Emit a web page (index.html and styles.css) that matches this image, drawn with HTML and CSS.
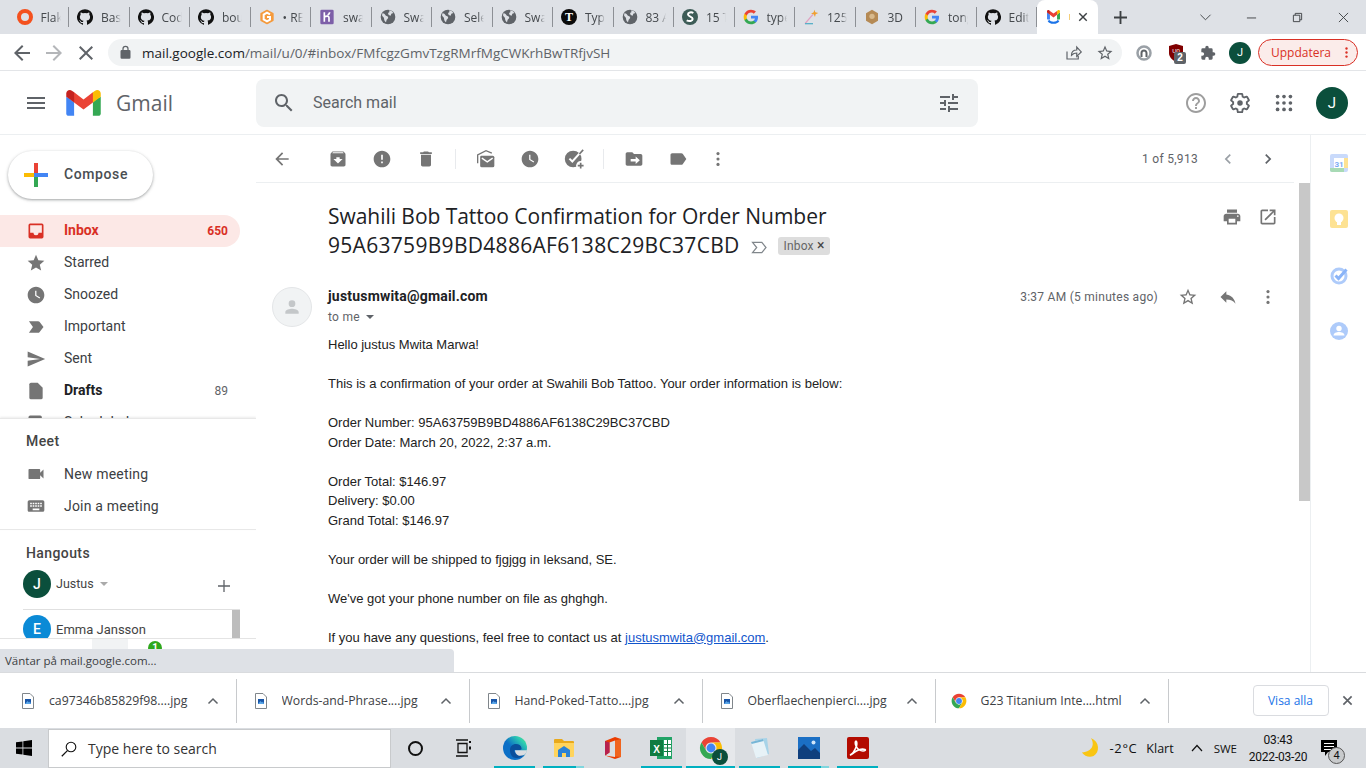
FILE: index.html
```html
<!DOCTYPE html>
<html lang="en">
<head>
  <meta charset="UTF-8">
  <title>Swahili Bob Tattoo Confirmation - Gmail</title>
  <link rel="stylesheet" href="styles.css">
</head>
<body>
  <!-- shared icons -->
  <svg class="sprite">
    <symbol id="i-github" viewBox="0 0 24 24"><path d="M12 .3a12 12 0 0 0-3.8 23.4c.6.1.8-.3.8-.6v-2c-3.3.7-4-1.6-4-1.6-.6-1.4-1.4-1.8-1.4-1.8-1-.7.1-.7.1-.7 1.2 0 1.9 1.2 1.9 1.2 1 1.8 2.8 1.3 3.5 1 0-.8.4-1.3.7-1.6-2.7-.3-5.5-1.3-5.5-6 0-1.2.5-2.3 1.3-3.1-.2-.4-.6-1.6 0-3.2 0 0 1-.3 3.4 1.2a11.5 11.5 0 0 1 6 0c2.3-1.5 3.3-1.2 3.3-1.2.6 1.6.2 2.8 0 3.2.9.8 1.3 1.9 1.3 3.2 0 4.6-2.8 5.6-5.5 5.9.5.4.9 1 .9 2.2v3.3c0 .3.1.7.8.6A12 12 0 0 0 12 .3"/></symbol>
    <symbol id="i-globe" viewBox="0 0 24 24"><circle cx="12" cy="12" r="11" fill="#5f6368"/><path fill="#dee1e6" d="M4 6c2 1 3 1 4 3s3 1 4 3-1 3-2 4l-1 4c-2-1-3-4-3-6s-3-3-3-5zM14 2c2 0 5 2 6 4l-3 1-1 3-3-1-1-3 2-1z"/></symbol>
    <symbol id="i-google" viewBox="0 0 24 24"><path fill="#4285F4" d="M22.56 12.25c0-.78-.07-1.53-.2-2.25H12v4.26h5.92c-.26 1.37-1.04 2.53-2.21 3.31v2.77h3.57c2.08-1.92 3.28-4.74 3.28-8.09z"/><path fill="#34A853" d="M12 23c2.97 0 5.46-.98 7.28-2.66l-3.57-2.77c-.98.66-2.23 1.06-3.71 1.06-2.86 0-5.29-1.93-6.16-4.53H2.18v2.84C3.99 20.53 7.7 23 12 23z"/><path fill="#FBBC05" d="M5.84 14.09c-.22-.66-.35-1.36-.35-2.09s.13-1.43.35-2.09V7.07H2.18C1.43 8.55 1 10.22 1 12s.43 3.45 1.18 4.93l2.85-2.22.81-.62z"/><path fill="#EA4335" d="M12 5.38c1.62 0 3.06.56 4.21 1.64l3.15-3.15C17.45 2.09 14.97 1 12 1 7.7 1 3.99 3.47 2.18 7.07l3.66 2.84c.87-2.6 3.3-4.53 6.16-4.53z"/></symbol>
    <symbol id="i-chrome" viewBox="0 0 24 24"><path fill="#ea4335" d="M21.53 6.5A11 11 0 0 0 2.47 6.5L7.24 14.75A5.5 5.5 0 0 1 12 6.5Z"/><path fill="#34a853" d="M2.47 6.5A11 11 0 0 0 12 23L16.76 14.75A5.5 5.5 0 0 1 7.24 14.75Z"/><path fill="#fbbc05" d="M12 23A11 11 0 0 0 21.53 6.5H12A5.5 5.5 0 0 1 16.76 14.75Z"/><circle cx="12" cy="12" r="4.4" fill="#4285f4"/></symbol>
    <symbol id="i-more" viewBox="0 0 24 24"><circle cx="12" cy="5.5" r="1.9"/><circle cx="12" cy="12" r="1.9"/><circle cx="12" cy="18.5" r="1.9"/></symbol>
    <symbol id="i-clock" viewBox="0 0 24 24"><path d="M12 2C6.5 2 2 6.5 2 12s4.5 10 10 10 10-4.5 10-10S17.5 2 12 2zm4.2 14.2L11 13V7h1.5v5.2l4.5 2.7-.8 1.3z"/></symbol>
    <symbol id="i-label" viewBox="0 0 24 24"><path d="M17.63 5.84C17.27 5.33 16.67 5 16 5L5 5.01C3.9 5.01 3 5.9 3 7v10c0 1.1.9 1.99 2 1.99L16 19c.67 0 1.27-.33 1.63-.84L22 12l-4.37-6.16z"/></symbol>
    <symbol id="i-file" viewBox="0 0 12 16"><path fill="#fff" stroke="#80868b" d="M.5.5h7.5l3.5 3.5v11.5H.5z"/><path fill="#1a56a8" d="M3 6h6v5H3z"/><path fill="#5aa7e8" d="M3 11l2.5-3 1.5 1.5L8 8.5 9 11z"/></symbol>
    <symbol id="i-chevup" viewBox="0 0 12 8"><path fill="none" stroke="#5f6368" stroke-width="1.5" d="M1.5 6.5L6 2l4.5 4.5"/></symbol>
    <symbol id="i-gm" viewBox="0 0 256 193">
      <path fill="#4285F4" d="M58.182 192.05V93.14L27.507 65.077 0 49.504v125.091c0 9.658 7.825 17.455 17.455 17.455h40.727z"/>
      <path fill="#34A853" d="M197.818 192.05h40.727c9.659 0 17.455-7.826 17.455-17.455V49.505l-31.156 17.837-27.026 25.798v98.91z"/>
      <path fill="#EA4335" d="M58.182 93.14l-4.174-38.647 4.174-36.989L128 69.868l69.818-52.364 4.669 34.992-4.669 40.644L128 145.504z"/>
      <path fill="#FBBC04" d="M197.818 17.504V93.14L256 49.504V26.231c0-21.585-24.64-33.89-41.89-20.945l-16.292 12.218z"/>
      <path fill="#C5221F" d="M0 49.504l26.759 20.07L58.182 93.14V17.504L41.89 5.286C24.61-7.66 0 4.646 0 26.23v23.273z"/>
    </symbol>
  </svg>

  <!-- tab strip -->
  <div class="tabstrip">
    <div class="tab"><svg class="favicon" viewBox="0 0 24 24"><circle cx="12" cy="12" r="9" fill="none" stroke="#f4511e" stroke-width="6"/></svg><span class="tab-title">Flak</span></div>
    <div class="tab"><svg class="favicon"><use href="#i-github"/></svg><span class="tab-title">Basi</span></div>
    <div class="tab"><svg class="favicon"><use href="#i-github"/></svg><span class="tab-title">Cod</span></div>
    <div class="tab"><svg class="favicon"><use href="#i-github"/></svg><span class="tab-title">bou</span></div>
    <div class="tab"><svg class="favicon" viewBox="0 0 24 24"><path fill="#f59a3c" stroke="#f59a3c" stroke-width="2" stroke-linejoin="round" d="M12 2l9 5v10l-9 5-9-5V7z"/><path fill="none" stroke="#fff" stroke-width="3" d="M16.5 8L12 5.500 7 8.500v7l5 3 4.500-2.500v-4H12"/></svg><span class="tab-title">• RE</span></div>
    <div class="tab"><svg class="favicon" viewBox="0 0 24 24"><rect x="2" y="1" width="20" height="22" rx="2" fill="#7d5fa8"/><path fill="none" stroke="#fff" stroke-width="2.5" d="M8 5v14M8 12c3-2 7-2 7 1v6M16 5c0 2-1 3-3 4"/></svg><span class="tab-title">swa</span></div>
    <div class="tab"><svg class="favicon"><use href="#i-globe"/></svg><span class="tab-title">Swa</span></div>
    <div class="tab"><svg class="favicon"><use href="#i-globe"/></svg><span class="tab-title">Sele</span></div>
    <div class="tab"><svg class="favicon"><use href="#i-globe"/></svg><span class="tab-title">Swa</span></div>
    <div class="tab"><svg class="favicon" viewBox="0 0 24 24"><circle cx="12" cy="12" r="12" fill="#0b0b0b"/><text x="12" y="18" text-anchor="middle" class="favicon-t">T</text></svg><span class="tab-title">Typ</span></div>
    <div class="tab"><svg class="favicon"><use href="#i-globe"/></svg><span class="tab-title">83 A</span></div>
    <div class="tab"><svg class="favicon" viewBox="0 0 24 24"><circle cx="12" cy="12" r="12" fill="#3d5c57"/><path fill="none" stroke="#fff" stroke-width="3" d="M17 6c-3-2-8-1-8 2 0 4 7 3 7 7 0 3-5 4-9 2"/></svg><span class="tab-title">15 T</span></div>
    <div class="tab"><svg class="favicon"><use href="#i-google"/></svg><span class="tab-title">type</span></div>
    <div class="tab"><svg class="favicon" viewBox="0 0 24 24"><path stroke="#e0a0c0" stroke-width="2" d="M3 22L15 8"/><path stroke="#5ab0c8" stroke-width="2" d="M3 22h12"/><path fill="#f0a030" d="M17 1l1.500 4L23 6l-4 2-1 4-2-4-4-1 4-2z"/></svg><span class="tab-title">125</span></div>
    <div class="tab"><svg class="favicon" viewBox="0 0 24 24"><path fill="#b58a55" d="M12 1l9 5.500v11L12 23l-9-5.500v-11z"/><circle cx="12" cy="11" r="4" fill="#d8b98c"/></svg><span class="tab-title">3D</span></div>
    <div class="tab"><svg class="favicon"><use href="#i-google"/></svg><span class="tab-title">tong</span></div>
    <div class="tab"><svg class="favicon"><use href="#i-github"/></svg><span class="tab-title">Edit</span></div>
    <div class="tab tab-active">
      <svg class="favicon-sm" viewBox="0 0 13 14"><use href="#i-gm" x="0" y="0" width="13" height="9.8"/><path fill="none" stroke="#1a73e8" stroke-width="2" d="M1.500 10.500c1.500 3 8.500 3 10 0"/></svg>
      <span class="tab-dot"></span>
      <svg class="tab-close" viewBox="0 0 12 12"><path stroke="#3c4043" stroke-width="1.7" d="M1.500 1.500l9 9M10.500 1.500l-9 9"/></svg>
    </div>
    <svg class="tab-new" viewBox="0 0 14 14"><path stroke="#3c4043" stroke-width="2" d="M7 0v14M0 7h14"/></svg>
    <div class="win-buttons">
      <svg class="win-btn" viewBox="0 0 12 8"><path fill="none" stroke="#3c4043" d="M.5 1L6 6.500 11.500 1"/></svg>
      <svg class="win-btn" viewBox="0 0 12 12"><path stroke="#3c4043" d="M1 6.500h10"/></svg>
      <svg class="win-btn" viewBox="0 0 12 12"><path fill="none" stroke="#3c4043" d="M1.500 3.500h7v7h-7zM3.500 3.500v-2h7v7h-2"/></svg>
      <svg class="win-btn" viewBox="0 0 12 12"><path stroke="#3c4043" d="M1 1l10 10M11 1L1 11"/></svg>
    </div>
  </div>

  <!-- browser toolbar -->
  <div class="browser-bar">
    <svg class="nav-btn" viewBox="0 0 24 24"><path fill="#5f6368" d="M20 11H7.83l5.59-5.59L12 4l-8 8 8 8 1.41-1.41L7.83 13H20v-2z"/></svg>
    <svg class="nav-btn" viewBox="0 0 24 24"><path fill="#b4b6b9" d="M4 11h12.17l-5.59-5.59L12 4l8 8-8 8-1.41-1.41L16.17 13H4v-2z"/></svg>
    <svg class="nav-btn" viewBox="0 0 24 24"><path fill="#5f6368" d="M19 6.41L17.59 5 12 10.59 6.41 5 5 6.41 10.59 12 5 17.59 6.41 19 12 13.41 17.59 19 19 17.59 13.41 12z"/></svg>
    <div class="omnibox">
      <svg class="omni-lock" viewBox="0 0 24 24"><path fill="#5f6368" d="M18 8h-1V6A5 5 0 0 0 7 6v2H6a2 2 0 0 0-2 2v10a2 2 0 0 0 2 2h12a2 2 0 0 0 2-2V10a2 2 0 0 0-2-2zM9 6a3 3 0 0 1 6 0v2H9z"/></svg>
      <span class="omni-url"><span class="omni-host">mail.google.com</span>/mail/u/0/#inbox/FMfcgzGmvTzgRMrfMgCWKrhBwTRfjvSH</span>
      <svg class="omni-icon" viewBox="0 0 24 24"><path fill="none" stroke="#5f6368" stroke-width="1.6" d="M4 10v10h15v-4M10 15c0-5 3-7 7-7V4l6 6.500-6 6V12c-3 0-5 1-7 3z"/></svg>
      <svg class="omni-icon" viewBox="0 0 24 24"><path fill="#5f6368" d="M22 9.24l-7.19-.62L12 2 9.19 8.63 2 9.24l5.46 4.73L5.82 21 12 17.27 18.18 21l-1.63-7.03L22 9.24zM12 15.4l-3.76 2.27 1-4.28-3.32-2.88 4.38-.38L12 6.1l1.71 4.04 4.38.38-3.32 2.88 1 4.28L12 15.4z"/></svg>
    </div>
    <svg class="ext ext-ring" viewBox="0 0 16 16"><circle cx="8" cy="8" r="6.5" fill="none" stroke="#9aa0a6" stroke-width="2.5"/><path fill="none" stroke="#5f6368" stroke-width="2" d="M5.500 12V8a2.500 2.500 0 0 1 5 0v4"/></svg>
    <div class="ext-ublock">
      <svg class="ublock-shield" viewBox="0 0 16 18"><path fill="#800000" d="M8 0l7 2v7c0 4-3 7-7 9-4-2-7-5-7-9V2z"/><text x="8" y="9" text-anchor="middle" class="ublock-text">U0</text></svg>
      <span class="ublock-badge">2</span>
    </div>
    <svg class="ext ext-puzzle" viewBox="0 0 24 24"><path fill="#5f6368" d="M20.5 11H19V7a2 2 0 0 0-2-2h-4V3.500a2.500 2.500 0 0 0-5 0V5H4a2 2 0 0 0-2 2v3.800h1.500a2.700 2.700 0 0 1 0 5.400H2V20a2 2 0 0 0 2 2h3.800v-1.500a2.700 2.700 0 0 1 5.400 0V22H17a2 2 0 0 0 2-2v-4h1.500a2.500 2.500 0 0 0 0-5z"/></svg>
    <span class="profile-chip">J</span>
    <div class="update-pill">
      <span>Uppdatera</span>
      <svg class="update-dots" viewBox="0 0 24 24"><use href="#i-more"/></svg>
    </div>
  </div>

  <!-- page viewport -->
  <div class="viewport">
    <header class="gm-header">
      <svg class="gm-menu" viewBox="0 0 24 24"><path d="M3 18h18v-2H3v2zm0-5h18v-2H3v2zm0-7v2h18V6H3z"/></svg>
      <svg class="gm-logo"><use href="#i-gm"/></svg>
      <span class="gm-wordmark">Gmail</span>
      <div class="gm-search">
        <svg class="gm-search-icon" viewBox="0 0 24 24"><path d="M15.5 14h-.79l-.28-.27C15.41 12.59 16 11.11 16 9.5 16 5.91 13.09 3 9.5 3S3 5.91 3 9.5 5.91 16 9.5 16c1.61 0 3.09-.59 4.23-1.57l.27.28v.79l5 4.99L20.49 19l-4.99-5zm-6 0C7.01 14 5 11.99 5 9.5S7.01 5 9.5 5 14 7.01 14 9.5 11.99 14 9.5 14z"/></svg>
        <span class="gm-search-text">Search mail</span>
        <svg class="gm-search-icon" viewBox="0 0 24 24"><path d="M3 17v2h6v-2H3zM3 5v2h10V5H3zm10 16v-2h8v-2h-8v-2h-2v6h2zM7 9v2H3v2h4v2h2V9H7zm14 4v-2H11v2h10zm-6-4h2V7h4V5h-4V3h-2v6z"/></svg>
      </div>
      <div class="gm-header-right">
        <svg class="gm-head-icon gm-help" viewBox="0 0 24 24"><path d="M11 18h2v-2h-2v2zm1-16C6.48 2 2 6.48 2 12s4.48 10 10 10 10-4.48 10-10S17.52 2 12 2zm0 18c-4.41 0-8-3.59-8-8s3.59-8 8-8 8 3.59 8 8-3.59 8-8 8zm0-14c-2.21 0-4 1.79-4 4h2c0-1.1.9-2 2-2s2 .9 2 2c0 2-3 1.75-3 5h2c0-2.25 3-2.5 3-5 0-2.21-1.79-4-4-4z"/></svg>
        <svg class="gm-head-icon" viewBox="0 0 24 24"><path fill="none" stroke="#5f6368" stroke-width="2" d="M19.43 12.98c.04-.32.07-.64.07-.98s-.03-.66-.07-.98l2.11-1.65c.19-.15.24-.42.12-.64l-2-3.46c-.12-.22-.39-.3-.61-.22l-2.49 1c-.52-.4-1.08-.73-1.69-.98l-.38-2.65C14.46 2.18 14.25 2 14 2h-4c-.25 0-.46.18-.49.42l-.38 2.65c-.61.25-1.17.59-1.69.98l-2.49-1c-.23-.09-.49 0-.61.22l-2 3.46c-.13.22-.07.49.12.64l2.11 1.65c-.04.32-.07.65-.07.98s.03.66.07.98l-2.11 1.65c-.19.15-.24.42-.12.64l2 3.46c.12.22.39.3.61.22l2.49-1c.52.4 1.08.73 1.69.98l.38 2.65c.03.24.24.42.49.42h4c.25 0 .46-.18.49-.42l.38-2.65c.61-.25 1.17-.59 1.69-.98l2.49 1c.23.09.49 0 .61-.22l2-3.46c.12-.22.07-.49-.12-.64l-2.11-1.65z"/><circle cx="12" cy="12" r="3"/></svg>
        <svg class="gm-head-icon" viewBox="0 0 24 24"><circle cx="5" cy="5" r="2"/><circle cx="12" cy="5" r="2"/><circle cx="19" cy="5" r="2"/><circle cx="5" cy="12" r="2"/><circle cx="12" cy="12" r="2"/><circle cx="19" cy="12" r="2"/><circle cx="5" cy="19" r="2"/><circle cx="12" cy="19" r="2"/><circle cx="19" cy="19" r="2"/></svg>
        <span class="gm-account">J</span>
      </div>
    </header>

    <div class="gm-body">
      <aside class="sidebar">
        <div class="compose">
          <svg class="compose-plus" viewBox="0 0 24 24"><path fill="#ea4335" d="M10 0h4v10h-4z"/><path fill="#4285f4" d="M14 10h10v4H14z"/><path fill="#34a853" d="M10 14h4v10h-4z"/><path fill="#fbbc04" d="M0 10h10v4H0z"/><path fill="#4285f4" d="M10 10h4v4h-4z"/></svg>
          <span>Compose</span>
        </div>
        <nav class="nav-list">
          <div class="nav-item nav-item-active">
            <svg class="nav-icon" viewBox="0 0 24 24"><path fill="#d93025" d="M19 3H5a2 2 0 0 0-2 2v14a2 2 0 0 0 2 2h14a2 2 0 0 0 2-2V5a2 2 0 0 0-2-2zm0 11h-4a3 3 0 0 1-6 0H5V5h14z"/></svg>
            <span class="nav-label">Inbox</span><span class="nav-count">650</span>
          </div>
          <div class="nav-item">
            <svg class="nav-icon" viewBox="0 0 24 24"><path d="M12 17.27L18.18 21l-1.64-7.03L22 9.24l-7.19-.61L12 2 9.19 8.63 2 9.24l5.46 4.73L5.82 21z"/></svg>
            <span class="nav-label">Starred</span>
          </div>
          <div class="nav-item">
            <svg class="nav-icon"><use href="#i-clock"/></svg>
            <span class="nav-label">Snoozed</span>
          </div>
          <div class="nav-item">
            <svg class="nav-icon" viewBox="0 0 24 24"><path d="M3.5 18.99l11 .01c.67 0 1.27-.33 1.64-.84L21 12l-4.86-6.16A2 2 0 0 0 14.5 5l-11 .01L8.34 12z"/></svg>
            <span class="nav-label">Important</span>
          </div>
          <div class="nav-item">
            <svg class="nav-icon" viewBox="0 0 24 24"><path d="M2.01 21L23 12 2.01 3 2 10l15 2-15 2z"/></svg>
            <span class="nav-label">Sent</span>
          </div>
          <div class="nav-item nav-item-bold">
            <svg class="nav-icon" viewBox="0 0 24 24"><path d="M14 2H6a2 2 0 0 0-2 2v16a2 2 0 0 0 2 2h12a2 2 0 0 0 2-2V8z"/></svg>
            <span class="nav-label">Drafts</span><span class="nav-count">89</span>
          </div>
          <div class="nav-item">
            <svg class="nav-icon" viewBox="0 0 24 24"><rect x="3" y="3" width="16" height="18" rx="2"/></svg>
            <span class="nav-label">Scheduled</span>
          </div>
        </nav>
        <section class="meet">
          <div class="side-heading">Meet</div>
          <div class="nav-item">
            <svg class="nav-icon" viewBox="0 0 24 24"><path d="M17 10.5V7a1 1 0 0 0-1-1H4a1 1 0 0 0-1 1v10a1 1 0 0 0 1 1h12a1 1 0 0 0 1-1v-3.500l4 4v-11z"/></svg>
            <span class="nav-label">New meeting</span>
          </div>
          <div class="nav-item">
            <svg class="nav-icon" viewBox="0 0 24 24"><path d="M20 5H4a2 2 0 0 0-2 2v10c0 1.1.9 2 2 2h16a2 2 0 0 0 2-2V7a2 2 0 0 0-2-2zm-9 3h2v2h-2zm0 3h2v2h-2zM8 8h2v2H8zm0 3h2v2H8zm-1 2H5v-2h2zm0-3H5V8h2zm9 7H8v-2h8zm0-4h-2v-2h2zm0-3h-2V8h2zm3 3h-2v-2h2zm0-3h-2V8h2z"/></svg>
            <span class="nav-label">Join a meeting</span>
          </div>
        </section>
        <section class="hangouts">
          <div class="side-heading">Hangouts</div>
          <div class="hang-me">
            <span class="hang-avatar hang-avatar-me">J</span>
            <span class="hang-name">Justus</span>
            <span class="hang-caret"></span>
            <svg class="hang-add" viewBox="0 0 12 12"><path stroke="#5f6368" stroke-width="1.3" d="M6 0v12M0 6h12"/></svg>
          </div>
          <div class="hang-list">
            <span class="hang-avatar hang-avatar-e">E</span>
            <span class="hang-name">Emma Jansson</span>
            <span class="hang-scroll"></span>
          </div>
        </section>
        <div class="side-foot">
          <span class="side-foot-tab"></span>
          <span class="side-foot-badge">1</span>
        </div>
      </aside>

      <main class="mail">
        <div class="mail-toolbar">
          <svg class="tool tool-back" viewBox="0 0 24 24"><path d="M20 11H7.83l5.59-5.59L12 4l-8 8 8 8 1.41-1.41L7.83 13H20v-2z"/></svg>
          <svg class="tool" viewBox="0 0 24 24"><path d="M20.54 5.23l-1.39-1.68C18.88 3.21 18.47 3 18 3H6c-.47 0-.88.21-1.16.55L3.46 5.23C3.17 5.57 3 6.02 3 6.5V19c0 1.1.9 2 2 2h14c1.1 0 2-.9 2-2V6.5c0-.48-.17-.93-.46-1.27zM12 17.5L6.5 12H10v-2h4v2h3.5L12 17.5zM5.12 5l.81-1h12l.94 1H5.12z"/></svg>
          <svg class="tool" viewBox="0 0 24 24"><path d="M12 2C6.48 2 2 6.48 2 12s4.48 10 10 10 10-4.48 10-10S17.52 2 12 2zm1 15h-2v-2h2v2zm0-4h-2V7h2v6z"/></svg>
          <svg class="tool" viewBox="0 0 24 24"><path d="M6 19c0 1.1.9 2 2 2h8c1.1 0 2-.9 2-2V7H6v12zM19 4h-3.5l-1-1h-5l-1 1H5v2h14V4z"/></svg>
          <span class="tool-sep"></span>
          <svg class="tool" viewBox="0 0 24 24"><path fill="none" stroke="#757575" stroke-width="1.6" d="M2 17V7l10-5 7 3"/><path d="M6 8h14a2 2 0 0 1 2 2v10a2 2 0 0 1-2 2H7a2 2 0 0 1-2-2V9z"/><path fill="none" stroke="#fff" stroke-width="1.6" d="M7 11l6.500 4.500L20 11"/></svg>
          <svg class="tool" viewBox="0 0 24 24"><use href="#i-clock"/></svg>
          <svg class="tool" viewBox="0 0 24 24"><circle cx="11" cy="12" r="10"/><path fill="none" stroke="#fff" stroke-width="2.4" d="M6.500 11.500l3.500 3.500 9-10"/><path stroke="#757575" stroke-width="2" d="M18.500 6L23 1"/><circle cx="20" cy="20" r="5.5" fill="#fff"/><path stroke="#757575" stroke-width="2" d="M20 16.500v7M16.500 20h7"/></svg>
          <span class="tool-sep"></span>
          <svg class="tool" viewBox="0 0 24 24"><path d="M20 6h-8l-2-2H4c-1.1 0-2 .9-2 2v12c0 1.1.9 2 2 2h16c1.1 0 2-.9 2-2V8c0-1.1-.9-2-2-2zm-6 12v-3H8v-3h6V9l5 4.500z"/></svg>
          <svg class="tool tool-label" viewBox="0 0 24 24"><use href="#i-label"/></svg>
          <svg class="tool" viewBox="0 0 24 24"><use href="#i-more"/></svg>
          <span class="pager-text">1 of 5,913</span>
          <svg class="pager-btn" viewBox="0 0 24 24"><path fill="#9aa0a6" d="M15.41 7.41L14 6l-6 6 6 6 1.41-1.41L10.83 12z"/></svg>
          <svg class="pager-btn" viewBox="0 0 24 24"><path fill="#5f6368" d="M10 6L8.59 7.41 13.17 12l-4.58 4.59L10 18l6-6z"/></svg>
        </div>
        <div class="mail-scroller">
          <div class="mail-pane">
            <div class="subject-row">
              <h1 class="subject">Swahili Bob Tattoo Confirmation for Order Number<br><span class="subject-code">95A63759B9BD4886AF6138C29BC37CBD</span>
                <svg class="subject-imp" viewBox="0 0 18 14"><path fill="none" stroke="#80868b" stroke-width="1.3" d="M1.500 1.500h10l4.500 5.500-4.500 5.500h-10L6 7z"/></svg>
                <span class="chip">Inbox <span class="chip-x">×</span></span>
              </h1>
              <div class="subject-tools">
                <svg class="tool" viewBox="0 0 24 24"><path d="M19 8H5c-1.66 0-3 1.34-3 3v6h4v4h12v-4h4v-6c0-1.66-1.34-3-3-3zm-3 11H8v-5h8v5zm3-7c-.55 0-1-.45-1-1s.45-1 1-1 1 .45 1 1-.45 1-1 1zm-1-9H6v4h12V3z"/></svg>
                <svg class="tool" viewBox="0 0 24 24"><path d="M19 19H5V5h7V3H5c-1.11 0-2 .9-2 2v14c0 1.1.89 2 2 2h14c1.1 0 2-.9 2-2v-7h-2v7zM14 3v2h3.59l-9.83 9.83 1.41 1.41L19 6.41V10h2V3h-7z"/></svg>
              </div>
            </div>
            <div class="message">
              <div class="msg-avatar">
                <svg viewBox="0 0 24 24"><path fill="#c4c7c9" d="M12 12a4 4 0 1 0 0-8 4 4 0 0 0 0 8zm0 2c-2.7 0-8 1.3-8 4v2h16v-2c0-2.7-5.3-4-8-4z"/></svg>
              </div>
              <div class="msg-main">
                <div class="msg-head">
                  <div class="msg-from">
                    <div class="msg-sender">justusmwita@gmail.com</div>
                    <div class="msg-to">to me <span class="msg-caret"></span></div>
                  </div>
                  <div class="msg-meta">
                    <span class="msg-time">3:37 AM (5 minutes ago)</span>
                    <svg class="tool" viewBox="0 0 24 24"><path d="M22 9.24l-7.19-.62L12 2 9.19 8.63 2 9.24l5.46 4.73L5.82 21 12 17.27 18.18 21l-1.63-7.03L22 9.24zM12 15.4l-3.76 2.27 1-4.28-3.32-2.88 4.38-.38L12 6.1l1.71 4.04 4.38.38-3.32 2.88 1 4.28L12 15.4z"/></svg>
                    <svg class="tool" viewBox="0 0 24 24"><path d="M10 9V5l-7 7 7 7v-4.1c5 0 8.5 1.6 11 5.1-1-5-4-10-11-11z"/></svg>
                    <svg class="tool" viewBox="0 0 24 24"><use href="#i-more"/></svg>
                  </div>
                </div>
                <div class="msg-body">
                  Hello justus Mwita Marwa!<br><br>
                  This is a confirmation of your order at Swahili Bob Tattoo. Your order information is below:<br><br>
                  Order Number: 95A63759B9BD4886AF6138C29BC37CBD<br>
                  Order Date: March 20, 2022, 2:37 a.m.<br><br>
                  Order Total: $146.97<br>
                  Delivery: $0.00<br>
                  Grand Total: $146.97<br><br>
                  Your order will be shipped to fjgjgg in leksand, SE.<br><br>
                  We've got your phone number on file as ghghgh.<br><br>
                  If you have any questions, feel free to contact us at <a href="#">justusmwita@gmail.com</a>.
                </div>
              </div>
            </div>
          </div>
          <div class="mail-scrollbar"></div>
        </div>
      </main>

      <aside class="addons">
        <svg class="addon" viewBox="0 0 20 20"><rect x="1" y="1" width="18" height="18" rx="2" fill="#c9dafb"/><rect x="5" y="5" width="10" height="10" fill="#fff"/><path fill="#fde293" d="M15 5h4v10h-4z"/><path fill="#a8dab5" d="M1 15h14v4H3a2 2 0 0 1-2-2z"/><text x="10" y="13.5" text-anchor="middle" class="addon-cal">31</text></svg>
        <svg class="addon" viewBox="0 0 20 20"><rect x="1" y="1" width="18" height="18" rx="2" fill="#fde293"/><circle cx="10" cy="9" r="4.5" fill="#fff"/><path fill="#fff" d="M8 13h4v3H8z"/></svg>
        <svg class="addon" viewBox="0 0 20 20"><circle cx="10" cy="11" r="7" fill="none" stroke="#aecbfa" stroke-width="3"/><path fill="none" stroke="#8ab4f8" stroke-width="3" d="M6.500 10.500l3 3 8-9"/></svg>
        <svg class="addon" viewBox="0 0 20 20"><circle cx="10" cy="10" r="9" fill="#aecbfa"/><circle cx="10" cy="7.5" r="2.7" fill="#fff"/><path fill="#fff" d="M4.500 14.500c0-2.500 3-3.500 5.500-3.500s5.500 1 5.500 3.500z"/></svg>
      </aside>
    </div>

    <div class="status-bubble">Väntar på mail.google.com...</div>
  </div>

  <!-- downloads shelf -->
  <div class="shelf">
    <div class="dl-item dl-first"><svg class="dl-icon"><use href="#i-file"/></svg><span class="dl-name">ca97346b85829f98....jpg</span><svg class="dl-chev"><use href="#i-chevup"/></svg></div>
    <div class="dl-item"><svg class="dl-icon"><use href="#i-file"/></svg><span class="dl-name">Words-and-Phrase....jpg</span><svg class="dl-chev"><use href="#i-chevup"/></svg></div>
    <div class="dl-item"><svg class="dl-icon"><use href="#i-file"/></svg><span class="dl-name">Hand-Poked-Tatto....jpg</span><svg class="dl-chev"><use href="#i-chevup"/></svg></div>
    <div class="dl-item"><svg class="dl-icon"><use href="#i-file"/></svg><span class="dl-name">Oberflaechenpierci....jpg</span><svg class="dl-chev"><use href="#i-chevup"/></svg></div>
    <div class="dl-item dl-html"><svg class="dl-icon"><use href="#i-chrome"/></svg><span class="dl-name">G23 Titanium Inte....html</span><svg class="dl-chev"><use href="#i-chevup"/></svg></div>
    <div class="shelf-all">Visa alla</div>
    <svg class="shelf-close" viewBox="0 0 12 12"><path stroke="#5f6368" stroke-width="1.8" d="M1.500 1.500l9 9M10.500 1.500l-9 9"/></svg>
  </div>

  <!-- windows taskbar -->
  <footer class="taskbar">
    <div class="start"><svg viewBox="0 0 16 16"><path d="M0 2.3L6.500 1.400V7.600H0zM7.300 1.300L16 0V7.600H7.300zM0 8.400H6.500V14.600L0 13.700zM7.300 8.400H16V16L7.300 14.700z"/></svg></div>
    <div class="task-search">
      <svg class="task-search-icon" viewBox="0 0 20 20"><circle cx="12.5" cy="7.5" r="6" fill="none" stroke="#111" stroke-width="1.4"/><path stroke="#111" stroke-width="1.6" d="M8 12l-7 7"/></svg>
      <span>Type here to search</span>
    </div>
    <div class="task-cell task-cortana"><span class="cortana-ring"></span></div>
    <div class="task-cell task-view"><svg viewBox="0 0 16 18"><path fill="none" stroke="#111" stroke-width="1.3" d="M2 4.500h9v9H2zM0 1h12M0 17h12"/><path stroke="#111" stroke-width="2" d="M14 2v2M14 7.500v3"/></svg></div>
    <div class="task-cell task-on">
      <svg viewBox="0 0 24 24">
        <defs><linearGradient id="edge-grad" x1="0" y1="1" x2="1" y2="0"><stop offset=".45" stop-color="#0c6fc6"/><stop offset=".8" stop-color="#2ed0b0"/><stop offset="1" stop-color="#6fdc6a"/></linearGradient></defs>
        <circle cx="12" cy="12" r="12" fill="url(#edge-grad)"/>
        <path fill="#0a4f9c" d="M7 14c0-3.500 2.500-6 6-6 3 0 5 1.500 5.500 4 .2 1.300-.3 2-2 2H11c0 2.500 2.500 4.500 6 4.500 2 0 3.500-.5 5-1.500-1.500 3-5 5-9 5-3.500 0-6-3.500-6-8z"/>
        <path fill="#dadde1" d="M12 14.200h12c-.4 2.200-1.300 3.600-2.500 4.500-1.300.6-3 1-4.500 1-3 0-5-2.700-5-5.500z"/>
      </svg>
    </div>
    <div class="task-cell task-on task-on-fade">
      <svg viewBox="0 0 24 24"><path fill="#e8a91c" d="M2 4a1 1 0 0 1 1-1h7l2 2h9a1 1 0 0 1 1 1v3H2z"/><path fill="#ffd45c" d="M2 7h20v13a1 1 0 0 1-1 1H3a1 1 0 0 1-1-1z"/><path fill="#2a82d6" d="M6 14l6-4 6 4v7h-4v-4h-4v4H6z"/></svg>
    </div>
    <div class="task-cell">
      <svg viewBox="0 0 24 24"><path fill="#eb3c00" d="M14 1l6 2v18l-6 2-10-3.500 10 1.500V4.500L8.500 6.500v10L4 19.500V5z"/><path fill="#b7224e" d="M4 5l4.500 1.500v10L4 19.500z"/><path fill="#f0641e" d="M14 4.500l6-1.500v18l-6-.5z"/></svg>
    </div>
    <div class="task-cell task-on">
      <svg viewBox="0 0 24 24"><path fill="#21a366" d="M7 1h15v22H7z"/><path fill="#fff" d="M14 4h7v16h-7z"/><path stroke="#107c41" d="M14 8.500h7M14 12h7M14 15.500h7M17.500 4v16"/><rect x="0" y="4" width="13" height="16" fill="#107c41"/><text x="6.5" y="16.5" text-anchor="middle" class="excel-x">X</text></svg>
    </div>
    <div class="task-cell task-on task-active">
      <div class="chrome-wrap">
        <svg><use href="#i-chrome"/></svg>
        <span class="chrome-badge">J</span>
      </div>
    </div>
    <div class="task-cell task-on">
      <svg viewBox="0 0 24 24"><path fill="#a7d3e8" d="M7 3l12-1 2 16-12 4z"/><path fill="#e7f2f7" d="M3 6l12-3 5 16-12 3z"/><path fill="#77b6d6" d="M3 6l12-3 .6 2-12 3z"/></svg>
    </div>
    <div class="task-cell task-on task-on-fade">
      <svg viewBox="0 0 24 24"><rect x="1" y="1" width="22" height="22" fill="#1b6fc4"/><circle cx="16.5" cy="6.5" r="2" fill="#cfe6fa"/><path fill="#0f3f7d" d="M1 23V14l6-6 7 7 4-3 5 5v6z"/></svg>
    </div>
    <div class="task-cell task-on">
      <svg viewBox="0 0 24 24"><rect x="1" y="1" width="22" height="22" rx="2" fill="#b30b00"/><path fill="none" stroke="#fff" stroke-width="1.6" d="M4 19c3-1 5-5 6.500-9 .5-2 .5-5-.5-5s-1 3 0 5c1.500 3 4 5 7 5 2 0 3-1 2-1.500-3-1-8 1-11 3-2 1.500-3.500 2.500-4 2.500z"/></svg>
    </div>
    <div class="tray">
      <svg class="tray-moon" viewBox="0 0 20 22"><path fill="#f9c513" d="M11 0c4 6 3 15-10 16 3 4 8 6 13 4 7-4 7-16-3-20z"/></svg>
      <span class="tray-temp">-2°C</span>
      <span class="tray-sky">Klart</span>
      <svg class="tray-chev" viewBox="0 0 12 8"><path fill="none" stroke="#111" stroke-width="1.2" d="M1 7l5-5.500L11 7"/></svg>
      <span class="tray-lang">SWE</span>
      <div class="tray-clock"><div>03:43</div><div>2022-03-20</div></div>
      <div class="tray-notif">
        <svg viewBox="0 0 16 16"><path d="M0 0h16v12H7l-3 4v-4H0z"/><path stroke="#fff" d="M3 3.500h10M3 6.500h10M3 9.500h7"/></svg>
        <span class="tray-count">4</span>
      </div>
    </div>
  </footer>
</body>
</html>
```

FILE: styles.css
```css
* {
  box-sizing: border-box;
}

html, body {
  margin: 0;
  width: 1366px;
  height: 768px;
  overflow: hidden;
}

body {
  display: flex;
  flex-direction: column;
  font-family: Roboto, "Liberation Sans", sans-serif;
  background: #fff;
  color: #202124;
}

svg {
  display: block;
  flex: none;
  overflow: visible;
}

.sprite {
  display: none;
}

/* tab strip */
.tabstrip {
  height: 34px;
  flex: none;
  display: flex;
  align-items: center;
  padding-left: 8.5px;
  background: #dee1e6;
  font-family: "Open Sans", sans-serif;
  font-size: 12px;
  color: #45494d;
}

.tab {
  width: 60.5px;
  height: 20px;
  flex: none;
  display: flex;
  align-items: center;
  padding-left: 8px;
  gap: 8px;
  border-right: 1px solid #8d9095;
  overflow: hidden;
}

.favicon {
  width: 16px;
  height: 16px;
  fill: #111;
}

.favicon-t {
  font: bold 18px "Liberation Serif", serif;
  fill: #fff;
}

.tab-title {
  width: 20px;
  white-space: nowrap;
  overflow: hidden;
  -webkit-mask-image: linear-gradient(90deg, #000 70%, transparent);
  mask-image: linear-gradient(90deg, #000 70%, transparent);
}

.tab-active {
  height: 34px;
  gap: 0;
  padding-left: 10px;
  border: 0;
  background: #fff;
  border-radius: 8px 8px 0 0;
}

.favicon-sm {
  width: 13px;
  height: 14px;
}

.tab-dot {
  width: 1px;
  height: 6px;
  margin-left: 9px;
  background: #f5cf7a;
}

.tab-close {
  width: 10px;
  height: 10px;
  margin-left: 8px;
}

.tab-new {
  width: 13px;
  height: 13px;
  margin-left: 16px;
}

.win-buttons {
  margin-left: auto;
  display: flex;
  align-items: center;
  padding-right: 17px;
}

.win-btn {
  width: 11px;
  height: 11px;
  margin-left: 35px;
}

/* browser toolbar */
.browser-bar {
  height: 36px;
  flex: none;
  display: flex;
  align-items: center;
  padding: 1px 0 0 10px;
  background: #fff;
}

.nav-btn {
  width: 24px;
  height: 24px;
  margin-right: 8px;
}

.omnibox {
  width: 1014px;
  height: 27px;
  margin-left: 2px;
  display: flex;
  align-items: center;
  padding: 0 8px 0 10px;
  background: #f1f3f4;
  border-radius: 14px;
  font-family: "Open Sans", sans-serif;
  font-size: 13.5px;
  color: #5f6368;
}

.omni-lock {
  width: 15px;
  height: 15px;
}

.omni-url {
  margin-left: 9px;
}

.omni-host {
  color: #202124;
}

.omni-icon {
  width: 18px;
  height: 18px;
  margin-left: 14px;
}

.omni-url + .omni-icon {
  margin-left: auto;
}

.ext {
  width: 16px;
  height: 16px;
}

.ext-ring {
  margin-left: 14px;
}

.ext-ublock {
  position: relative;
  width: 16px;
  height: 18px;
  margin-left: 16px;
}

.ublock-shield {
  width: 16px;
  height: 18px;
}

.ublock-text {
  font: 6px "Liberation Sans", sans-serif;
  fill: #fff;
}

.ublock-badge {
  position: absolute;
  left: 6px;
  top: 8px;
  width: 12px;
  height: 12px;
  background: #5f6368;
  color: #fff;
  border-radius: 2px;
  font: bold 10px/12px "Liberation Sans", sans-serif;
  text-align: center;
}

.ext-puzzle {
  margin-left: 16px;
}

.profile-chip {
  width: 22px;
  height: 22px;
  margin-left: 13px;
  border-radius: 50%;
  background: #0b4f3c;
  color: #fff;
  font-size: 11px;
  line-height: 22px;
  text-align: center;
}

.update-pill {
  width: 100px;
  height: 27px;
  margin-left: 7px;
  display: flex;
  align-items: center;
  padding-left: 12px;
  background: #fbecea;
  border: 1px solid #d93025;
  border-radius: 14px;
  font-family: "Open Sans", sans-serif;
  font-size: 12px;
  color: #d93025;
}

.update-dots {
  width: 15px;
  height: 15px;
  margin-left: 8px;
  fill: #d93025;
}

/* page */
.viewport {
  position: relative;
  height: 602px;
  flex: none;
  display: flex;
  flex-direction: column;
  overflow: hidden;
  background: #fff;
}

.gm-header {
  height: 65px;
  flex: none;
  display: flex;
  align-items: center;
  padding-left: 24px;
  border-top: 1px solid #e3e5e8;
  border-bottom: 1px solid #eceff1;
}

.gm-menu {
  width: 24px;
  height: 24px;
  fill: #5f6368;
}

.gm-logo {
  width: 35px;
  height: 26px;
  margin-left: 18px;
}

.gm-wordmark {
  width: 140px;
  margin-left: 15px;
  font-family: "Open Sans", sans-serif;
  font-size: 21px;
  color: #5f6368;
}

.gm-search {
  width: 722px;
  height: 48px;
  display: flex;
  align-items: center;
  padding: 0 17px 0 16px;
  background: #f1f3f4;
  border-radius: 8px;
}

.gm-search-icon {
  width: 24px;
  height: 24px;
  fill: #5f6368;
}

.gm-search-text {
  flex: 1;
  margin-left: 17px;
  font-size: 16px;
  color: #5f6368;
}

.gm-header-right {
  margin-left: auto;
  display: flex;
  align-items: center;
  padding-right: 18px;
}

.gm-head-icon {
  width: 22px;
  height: 22px;
  margin-right: 22px;
  fill: #5f6368;
}

.gm-help {
  width: 24px;
  height: 24px;
  margin: 0 21px 0 -1px;
  fill: #9e9e9e;
}

.gm-account {
  width: 32px;
  height: 32px;
  margin-left: -1px;
  border-radius: 50%;
  background: #0b4f3c;
  color: #fff;
  font-size: 15px;
  line-height: 32px;
  text-align: center;
}

.gm-body {
  flex: 1;
  min-height: 0;
  display: flex;
}

/* sidebar */
.sidebar {
  width: 256px;
  flex: none;
  display: flex;
  flex-direction: column;
  overflow: hidden;
}

.compose {
  width: 145px;
  height: 48px;
  flex: none;
  margin: 16px 0 16px 8px;
  display: flex;
  align-items: center;
  gap: 16px;
  padding: 0 0 2px 16px;
  background: #fff;
  border-radius: 24px;
  box-shadow: 0 1px 2px rgba(60, 64, 67, .3), 0 1px 3px 1px rgba(60, 64, 67, .15);
  font-size: 14px;
  font-weight: 500;
  letter-spacing: .6px;
  color: #4a4e52;
}

.compose-plus {
  width: 24px;
  height: 24px;
  margin-top: 2px;
}

.nav-list {
  height: 203px;
  flex: none;
  overflow: hidden;
}

.nav-list .nav-label {
  padding-bottom: 2px;
}

.nav-item {
  width: 240px;
  height: 32px;
  display: flex;
  align-items: center;
  padding: 0 12px 0 26px;
  border-radius: 0 16px 16px 0;
  font-size: 14px;
  color: #3c4043;
}

.nav-icon {
  width: 20px;
  height: 20px;
  margin-right: 18px;
  fill: #757575;
}

.nav-label {
  flex: 1;
}

.nav-count {
  font-size: 12px;
  color: #5f6368;
}

.nav-item-active {
  background: #fce8e6;
  color: #d93025;
  font-weight: 700;
}

.nav-item-active .nav-count {
  color: #d93025;
}

.nav-item-bold {
  font-weight: 700;
  color: #202124;
}

.nav-item-bold .nav-count {
  font-weight: 400;
}

.meet {
  flex: none;
  height: 112px;
  padding-top: 11px;
  border-top: 1px solid #e8e8e8;
  border-bottom: 1px solid #e8e8e8;
  box-shadow: 0 -1px 2px rgba(0, 0, 0, .08);
  position: relative;
  background: #fff;
}

.meet .nav-item {
  letter-spacing: .2px;
}

.side-heading {
  height: 22px;
  margin-bottom: 6px;
  padding-left: 26px;
  font-size: 14px;
  font-weight: 500;
  letter-spacing: .4px;
  line-height: 22px;
  color: #444;
}

.hangouts {
  flex: none;
  height: 109px;
  padding-top: 12px;
  border-bottom: 1px solid #e4e4e4;
  overflow: hidden;
}

.hang-me {
  height: 28px;
  display: flex;
  align-items: center;
  padding-left: 23px;
  font-size: 13px;
  color: #444;
}

.hang-avatar {
  width: 28px;
  height: 28px;
  flex: none;
  border-radius: 50%;
  color: #fff;
  font-size: 14px;
  font-weight: 500;
  line-height: 28px;
  text-align: center;
}

.hang-avatar-me {
  background: #0b4f3c;
}

.hang-avatar-e {
  background: #0b8ad6;
}

.hang-name {
  margin-left: 5px;
  font-size: 13px;
  color: #444;
}

.hang-me .hang-name {
  margin-bottom: 2px;
  font-size: 12.5px;
}

.hang-caret {
  width: 0;
  height: 0;
  margin-left: 6px;
  border: 4px solid transparent;
  border-top-color: #aaa;
  border-bottom: 0;
}

.hang-add {
  width: 12px;
  height: 12px;
  margin: 4px 26px 0 auto;
}

.hang-list {
  width: 217px;
  height: 40px;
  margin: 11px 0 0 23px;
  display: flex;
  padding-top: 5px;
  border-top: 1px solid #e0e0e0;
  position: relative;
}

.hang-scroll {
  position: absolute;
  right: 0;
  top: 0;
  width: 8px;
  height: 40px;
  background: #bdbdbd;
}

.hang-list .hang-name {
  line-height: 30px;
}

.side-foot {
  flex: 1;
  position: relative;
  background: #fff;
}

.side-foot-tab {
  position: absolute;
  left: 92px;
  top: 0;
  width: 36px;
  height: 30px;
  background: #f1f3f4;
}

.side-foot-badge {
  position: absolute;
  left: 148px;
  top: 2px;
  width: 14px;
  height: 14px;
  border-radius: 50%;
  background: #2ea81c;
  color: #fff;
  font-size: 10px;
  font-weight: 700;
  line-height: 14px;
  text-align: center;
}

/* message view */
.mail {
  flex: 1;
  min-width: 0;
  display: flex;
  flex-direction: column;
}

.mail-toolbar {
  width: 1038px;
  height: 48px;
  flex: none;
  display: flex;
  align-items: center;
  padding-left: 16px;
  border-bottom: 1px solid #eceff1;
}

.tool {
  width: 20px;
  height: 20px;
  margin-right: 24px;
  fill: #757575;
}

.tool-back {
  margin-right: 36px;
}

.tool-label {
  margin-right: 20px;
}

.tool-sep {
  width: 1px;
  height: 20px;
  margin: 0 20px 0 -5px;
  background: #e8eaed;
}

.pager-text {
  margin-left: auto;
  margin-right: 20px;
  font-size: 12px;
  letter-spacing: .3px;
  color: #5f6368;
}

.pager-btn {
  width: 20px;
  height: 20px;
  margin-right: 20px;
}

.pager-btn:last-child {
  margin-right: 16px;
}

.mail-scroller {
  flex: 1;
  min-height: 0;
  display: flex;
}

.mail-pane {
  flex: 1;
  min-width: 0;
  padding-top: 19px;
}

.mail-scrollbar {
  width: 11px;
  height: 318px;
  flex: none;
  background: #c8c8c8;
}

.subject-row {
  display: flex;
  justify-content: space-between;
  padding: 0 21px 0 72px;
}

.subject {
  margin: 0;
  font-family: "Open Sans", sans-serif;
  font-size: 21px;
  font-weight: 400;
  letter-spacing: -.04px;
  line-height: 29px;
  color: #202124;
}

.subject-code {
  letter-spacing: .3px;
}

.subject-imp {
  display: inline-block;
  width: 17px;
  height: 13px;
  margin: 0 5px 0 6px;
  vertical-align: -1px;
}

.chip {
  display: inline-block;
  height: 18px;
  padding: 0 5px;
  vertical-align: 3px;
  background: #ddd;
  border-radius: 3px;
  font-family: Roboto, sans-serif;
  font-size: 12px;
  letter-spacing: .2px;
  line-height: 18px;
  color: #666;
}

.chip-x {
  color: #444;
  font-size: 14px;
  line-height: 14px;
}

.subject-tools {
  display: flex;
  gap: 16px;
  padding-top: 5px;
}

.subject-tools .tool {
  margin: 0;
}

.message {
  display: flex;
  gap: 16px;
  margin-top: 27px;
  padding: 0 21px 0 16px;
}

.msg-avatar {
  width: 40px;
  height: 40px;
  flex: none;
  padding: 9px;
  background: #f1f3f4;
  border: 1px solid #e4e6e8;
  border-radius: 50%;
}

.msg-main {
  flex: 1;
  min-width: 0;
}

.msg-head {
  display: flex;
  justify-content: space-between;
}

.msg-sender {
  font-size: 14px;
  font-weight: 700;
  letter-spacing: .2px;
  line-height: 18px;
  color: #202124;
}

.msg-to {
  margin-top: 2px;
  font-size: 12px;
  letter-spacing: .3px;
  line-height: 20px;
  color: #5f6368;
}

.msg-caret {
  display: inline-block;
  width: 0;
  height: 0;
  margin-left: 3px;
  vertical-align: 2px;
  border: 4px solid transparent;
  border-top-color: #5f6368;
  border-bottom: 0;
}

.msg-meta {
  height: 20px;
  display: flex;
  align-items: center;
}

.msg-meta .tool {
  margin: 0 0 0 20px;
}

.msg-time {
  font-size: 12px;
  letter-spacing: .27px;
  color: #5f6368;
}

.msg-body {
  margin-top: 8px;
  font-family: "Liberation Sans", Arial, sans-serif;
  font-size: 13px;
  line-height: 19.5px;
  color: #222;
}

.msg-body a {
  color: #1155cc;
}

/* addons rail */
.addons {
  width: 56px;
  flex: none;
  display: flex;
  flex-direction: column;
  align-items: center;
  gap: 36px;
  padding-top: 18px;
  border-left: 1px solid #eceff1;
}

.addon {
  width: 20px;
  height: 20px;
}

.addon-cal {
  font: bold 8px Roboto, sans-serif;
  fill: #7baaf7;
}

.status-bubble {
  position: absolute;
  left: 0;
  bottom: 0;
  width: 454px;
  height: 23px;
  padding-left: 5px;
  background: #dee1e6;
  border-top-right-radius: 4px;
  font-family: "Open Sans", sans-serif;
  font-size: 11.5px;
  line-height: 23px;
  color: #3c4043;
}

/* downloads shelf */
.shelf {
  height: 56px;
  flex: none;
  display: flex;
  align-items: center;
  background: #fff;
  border-top: 1px solid #d9dbde;
  font-family: "Open Sans", sans-serif;
  font-size: 12.25px;
  color: #3c4043;
}

.dl-item {
  width: 233px;
  height: 44px;
  flex: none;
  display: flex;
  align-items: center;
  padding-left: 18px;
  border-right: 1px solid #c8cacd;
}

.dl-first {
  width: 236.5px;
  padding-left: 22px;
}

.dl-icon {
  width: 12px;
  height: 16px;
}

.dl-html {
  padding-left: 15px;
}

.dl-html .dl-icon {
  width: 16px;
}

.dl-html .dl-name {
  margin-left: 14px;
}

.dl-name {
  flex: 1;
  margin-left: 15px;
  white-space: nowrap;
  overflow: hidden;
}

.dl-chev {
  width: 12px;
  height: 8px;
  margin-right: 17px;
}

.shelf-all {
  width: 76px;
  height: 31px;
  margin-left: 84px;
  border: 1px solid #dadce0;
  border-radius: 4px;
  font-size: 12px;
  line-height: 29px;
  text-align: center;
  color: #1a73e8;
}

.shelf-close {
  width: 11px;
  height: 11px;
  margin-left: 13px;
}

/* taskbar */
.taskbar {
  height: 40px;
  flex: none;
  display: flex;
  background: #dadde1;
  font-family: "Open Sans", sans-serif;
  color: #111;
}

.start {
  width: 48px;
  display: flex;
  align-items: center;
  justify-content: center;
}

.start svg {
  width: 16px;
  height: 16px;
}

.task-search {
  width: 343px;
  margin-top: 1px;
  display: flex;
  align-items: center;
  padding-left: 12px;
  gap: 11px;
  background: #fff;
  border: 1px solid #c8cacc;
  font-size: 14px;
  color: #333;
}

.task-search-icon {
  width: 16px;
  height: 16px;
}

.task-cell {
  width: 49px;
  display: flex;
  align-items: center;
  justify-content: center;
  position: relative;
}

.task-cell svg {
  width: 24px;
  height: 24px;
}

.task-view {
  width: 47px;
  margin-right: 3px;
}

.task-view svg {
  width: 16px;
  height: 18px;
}

.cortana-ring {
  width: 15px;
  height: 15px;
  border: 2.5px solid #111;
  border-radius: 50%;
}

.task-on::after {
  content: "";
  position: absolute;
  left: 4px;
  right: 4px;
  bottom: 0;
  height: 2px;
  background: #00b0c0;
}

.task-on-fade::after {
  background: linear-gradient(90deg, #00b0c0 80%, #7fd6de 80%);
}

.task-active {
  background: #e6e8eb;
}

.task-active::after {
  left: 0;
  right: 0;
}

.chrome-wrap {
  position: relative;
  width: 24px;
  height: 24px;
}

.chrome-badge {
  position: absolute;
  right: -5px;
  bottom: -5px;
  width: 16px;
  height: 16px;
  border-radius: 50%;
  background: #0b4f3c;
  color: #fff;
  font: 9px/16px Roboto, sans-serif;
  text-align: center;
}

.excel-x {
  font: bold 10px "Liberation Sans", sans-serif;
  fill: #fff;
}

.tray {
  margin-left: auto;
  display: flex;
  align-items: center;
  padding-right: 20px;
  font-size: 12.5px;
}

.tray-moon {
  width: 18px;
  height: 20px;
}

.tray-temp {
  margin-left: 11px;
  font-size: 13px;
  letter-spacing: .6px;
}

.tray-sky {
  margin-left: 9px;
}

.tray-chev {
  width: 12px;
  height: 8px;
  margin-left: 17px;
}

.tray-lang {
  margin-left: 11px;
  font-size: 11.5px;
}

.tray-clock {
  width: 68px;
  margin-left: 7px;
  padding-top: 2px;
  font-family: Roboto, sans-serif;
  font-size: 12px;
  letter-spacing: -.2px;
  line-height: 17px;
  text-align: center;
}

.tray-notif {
  position: relative;
  width: 26px;
  margin-left: 8px;
  padding-left: 1px;
}

.tray-notif svg {
  width: 16px;
  height: 16px;
}

.tray-count {
  position: absolute;
  left: 8px;
  top: 7px;
  width: 17px;
  height: 17px;
  border: 1px solid #555;
  border-radius: 50%;
  background: #c8cacc;
  font: 11px/15px Roboto, sans-serif;
  text-align: center;
}
```
